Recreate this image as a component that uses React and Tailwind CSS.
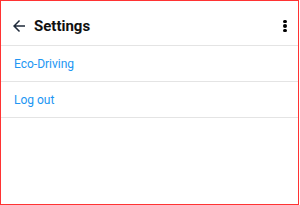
export default function App() {
  return (
    <div
      className="w-[299px] h-[205px] border border-[#ff3333] bg-white flex flex-col"
      style={{ fontFamily: "Roboto, 'Liberation Sans', sans-serif" }}
    >
      <div className="h-[45px] flex items-center pt-[6px] pl-[9px] pr-[10px] border-b border-[#e4e4e4]">
        <svg width="18" height="18" viewBox="0 0 24 24" className="mr-[6px]">
          <path d="M20 11H7.83l5.59-5.59L12 4l-8 8 8 8 1.41-1.41L7.83 13H20v-2z" fill="#1f2a3a" />
        </svg>
        <span className="text-[15px] font-bold text-[#111]">Settings</span>
        <div className="ml-auto flex flex-col gap-[1px] items-center w-[6px]">
          <span className="w-[3.5px] h-[3.5px] rounded-full bg-black" />
          <span className="w-[3.5px] h-[3.5px] rounded-full bg-black" />
          <span className="w-[3.5px] h-[3.5px] rounded-full bg-black" />
        </div>
      </div>
      <div className="h-[36px] flex items-center pl-[13px] border-b border-[#e4e4e4] text-[12px] text-[#2196f3]">
        Eco-Driving
      </div>
      <div className="h-[36px] flex items-center pl-[13px] border-b border-[#e4e4e4] text-[12px] text-[#2196f3]">
        Log out
      </div>
    </div>
  );
}
